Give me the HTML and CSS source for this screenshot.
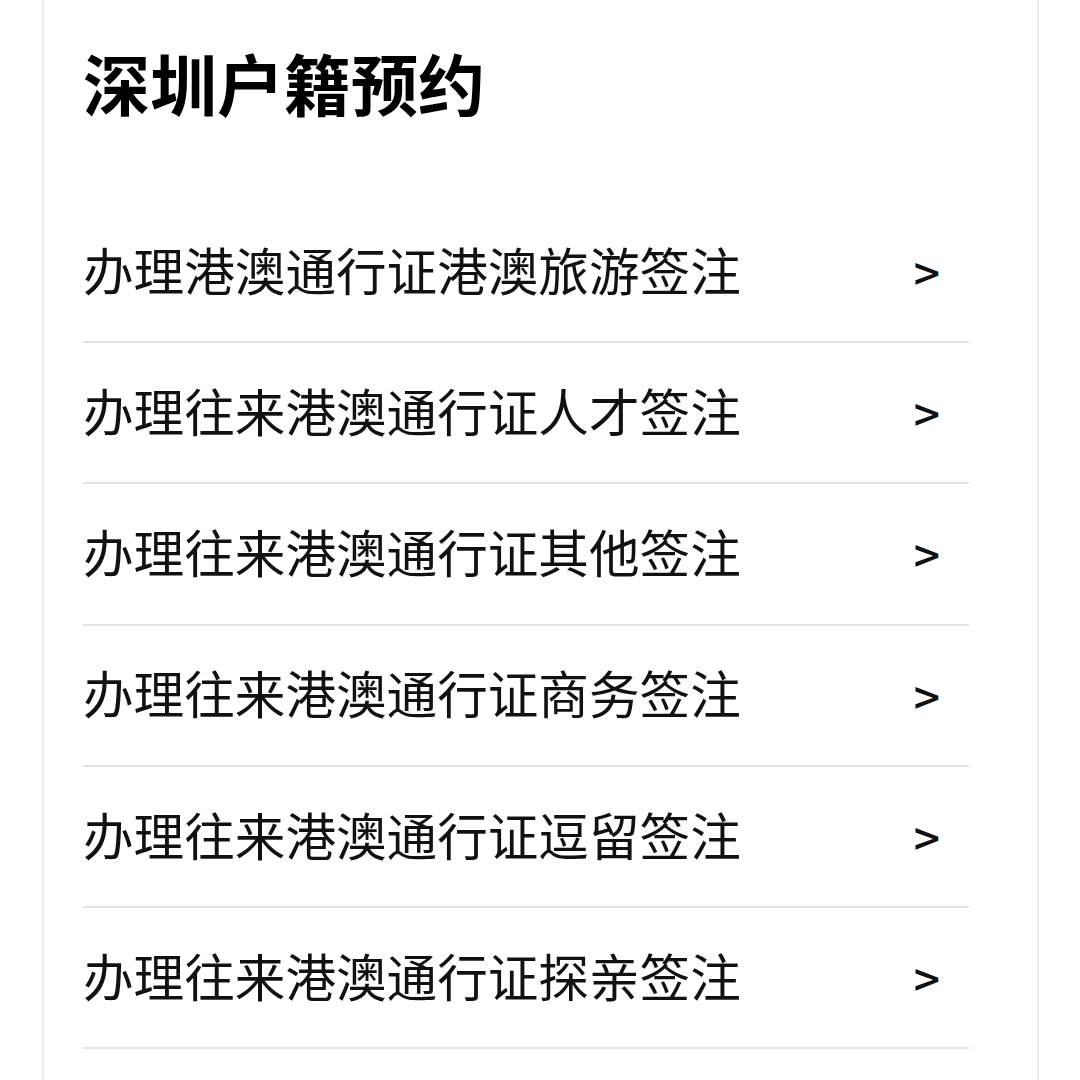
FILE: index.html
```html
<!DOCTYPE html>
<html lang="zh-CN">
<head>
<meta charset="utf-8">
<link rel="stylesheet" href="styles.css">
</head>
<body>
<div class="card">
  <h1 class="title">深圳户籍预约</h1>
  <ul class="list">
    <li class="row"><span class="label">办理港澳通行证港澳旅游签注</span><span class="chev">&gt;</span></li>
    <li class="row"><span class="label">办理往来港澳通行证人才签注</span><span class="chev">&gt;</span></li>
    <li class="row"><span class="label">办理往来港澳通行证其他签注</span><span class="chev">&gt;</span></li>
    <li class="row"><span class="label">办理往来港澳通行证商务签注</span><span class="chev">&gt;</span></li>
    <li class="row"><span class="label">办理往来港澳通行证逗留签注</span><span class="chev">&gt;</span></li>
    <li class="row"><span class="label">办理往来港澳通行证探亲签注</span><span class="chev">&gt;</span></li>
  </ul>
</div>
</body>
</html>
```
FILE: styles.css
```css
html, body {
  margin: 0;
  padding: 0;
  background: #ffffff;
}
body {
  font-family: "Noto Sans CJK SC", "Noto Sans", sans-serif;
  color: #111;
  height: 1080px;
  overflow: hidden;
}
.card {
  box-sizing: border-box;
  margin-left: 42px;
  width: 997px;
  height: 1080px;
  border-left: 2px solid #ececec;
  border-right: 2px solid #ececec;
  background: #fff;
  padding: 48px 68px 0 39px;
}
.title {
  margin: 0 0 87px 0;
  font-size: 67px;
  line-height: 67px;
  font-weight: 700;
  color: #000;
}
.list {
  list-style: none;
  margin: 0;
  padding: 0;
}
.row {
  box-sizing: border-box;
  display: flex;
  align-items: center;
  justify-content: space-between;
  height: 141.2px;
  border-bottom: 2px solid #e2e2e2;
  padding: 0 29px 5px 0;
}
.label {
  font-size: 50.6px;
  line-height: 1;
  font-weight: 400;
  color: #111;
}
.chev {
  font-size: 46px;
  line-height: 1;
  font-weight: 500;
  color: #111;
  padding-top: 4px;
}
```
